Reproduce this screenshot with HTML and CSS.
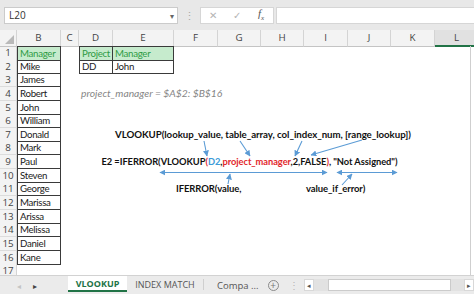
FILE: index.html
```html
<!DOCTYPE html>
<html>
<head>
<meta charset="utf-8">
<link rel="stylesheet" href="styles.css">
</head>
<body>
<div class="app">
  <div class="fbar">
    <div class="namebox"><span>L20</span><span class="dd">&#9662;</span></div>
    <div class="vdots">&#8942;</div>
    <div class="fbtns"><span class="fb dis">&#10005;</span><span class="fb dis">&#10003;</span><span class="fb fx"><i>f</i><sub>x</sub></span></div>
    <div class="finput"></div>
  </div>

  <div class="sheet">
    <div class="hrow">
      <div class="corner"><span class="tri"></span></div>
      <div class="ch">B</div><div class="ch">C</div><div class="ch">D</div><div class="ch">E</div>
      <div class="ch">F</div><div class="ch">G</div><div class="ch">H</div><div class="ch">I</div>
      <div class="ch">J</div><div class="ch">K</div><div class="ch sel">L</div>
    </div>
    <div class="rows">
      <div class="row"><div class="rh">1</div><div class="c g bt bl br bb">Manager</div><div class="c cD1 g bt bl br bb">Project</div><div class="c g bt br bb">Manager</div></div>
      <div class="row"><div class="rh">2</div><div class="c bl br bb">Mike</div><div class="c cD1 bl br bb">DD</div><div class="c br bb">John</div></div>
      <div class="row"><div class="rh">3</div><div class="c bl br bb">James</div></div>
      <div class="row"><div class="rh">4</div><div class="c bl br bb">Robert</div><div class="c cD note">project_manager = $A$2: $B$16</div></div>
      <div class="row"><div class="rh">5</div><div class="c bl br bb">John</div></div>
      <div class="row"><div class="rh">6</div><div class="c bl br bb">William</div></div>
      <div class="row"><div class="rh">7</div><div class="c bl br bb">Donald</div><div class="c cE fml vl">VLOOKUP(lookup_value, table_array, col_index_num, [range_lookup])</div></div>
      <div class="row"><div class="rh">8</div><div class="c bl br bb">Mark</div></div>
      <div class="row"><div class="rh">9</div><div class="c bl br bb">Paul</div><div class="c cD fml e2">E2 =IFERROR(VLOOKUP<span class="red">(</span><span class="blue">D2</span>,<span class="red">project_manager</span>,2,FALSE<span class="red">)</span>, "Not Assigned")</div></div>
      <div class="row"><div class="rh">10</div><div class="c bl br bb">Steven</div></div>
      <div class="row"><div class="rh">11</div><div class="c bl br bb">George</div><div class="c cF fml sm">IFERROR(value,</div><div class="c cI fml sm">value_if_error)</div></div>
      <div class="row"><div class="rh">12</div><div class="c bl br bb">Marissa</div></div>
      <div class="row"><div class="rh">13</div><div class="c bl br bb">Arissa</div></div>
      <div class="row"><div class="rh">14</div><div class="c bl br bb">Melissa</div></div>
      <div class="row"><div class="rh">15</div><div class="c bl br bb">Daniel</div></div>
      <div class="row"><div class="rh">16</div><div class="c bl br bb">Kane</div></div>
      <div class="row"><div class="rh">17</div></div>
    </div>
  </div>

  <div class="tabs">
    <div class="nav"><span class="nv dim">&#9666;</span><span class="nv">&#9656;</span></div>
    <div class="tab active">VLOOKUP</div>
    <div class="tab mid">INDEX MATCH</div>
    <div class="tab last">Compa ...</div>
    <div class="add"><span class="plus">+</span></div>
    <div class="tdots">&#8942;</div>
    <div class="hscroll">
      <span class="sarrow">&#9666;</span>
      <div class="track"><div class="thumb"></div></div>
      <span class="sarrow">&#9656;</span>
    </div>
  </div>

  <svg class="arrows" width="474" height="294" viewBox="0 0 474 294">
    <defs>
      <marker id="ah" viewBox="0 0 10 10" refX="9" refY="5" markerWidth="6" markerHeight="6" markerUnits="userSpaceOnUse" orient="auto-start-reverse">
        <path d="M0,0 L10,5 L0,10 z" fill="#5b9bd5"/>
      </marker>
    </defs>
    <g stroke="#5b9bd5" stroke-width="1.1" fill="none">
      <line x1="204" y1="141" x2="207" y2="156" marker-end="url(#ah)"/>
      <line x1="240" y1="141" x2="250" y2="156" marker-end="url(#ah)"/>
      <line x1="302" y1="141" x2="295" y2="156" marker-end="url(#ah)"/>
      <line x1="362" y1="140" x2="311" y2="155" marker-end="url(#ah)"/>
      <line x1="160" y1="172.5" x2="327" y2="172.5" marker-start="url(#ah)" marker-end="url(#ah)"/>
      <line x1="337" y1="172.5" x2="397" y2="172.5" marker-start="url(#ah)" marker-end="url(#ah)"/>
      <line x1="228" y1="184" x2="230" y2="174" marker-end="url(#ah)"/>
      <line x1="342" y1="185" x2="352" y2="174" marker-end="url(#ah)"/>
    </g>
  </svg>
</div>
</body>
</html>
```

FILE: styles.css
```css
* { box-sizing: border-box; margin: 0; padding: 0; }
html, body { width: 474px; height: 294px; overflow: hidden; background: #fff; }
body { font-family: "Open Sans", "Noto Sans", sans-serif; }

.app { position: relative; width: 474px; height: 294px; display: flex; flex-direction: column; overflow: hidden; }

/* formula bar */
.fbar { flex: none; height: 30px; background: #e8e8e8; display: flex; align-items: center; padding-left: 4px; }
.namebox { width: 174px; height: 17px; background: #fff; border: 1px solid #cbcbcb; display: flex; align-items: center; justify-content: space-between; padding: 0 3px 0 4px; font-size: 10px; color: #333; }
.dd { font-size: 8px; color: #666; }
.vdots { width: 22px; text-align: center; color: #a8a8a8; font-size: 11px; }
.fbtns { width: 74px; height: 17px; background: #fff; border: 1px solid #d6d6d6; display: flex; align-items: center; }
.fb { width: 24px; text-align: center; font-size: 10px; }
.fb.dis { color: #b4b4b4; }
.fx { color: #555; font-family: "Liberation Serif", serif; font-size: 11px; }
.fx sub { font-size: 7px; font-style: italic; }
.finput { margin-left: 2px; flex: 1; height: 17px; background: #fff; border: 1px solid #d6d6d6; border-right: none; }

/* sheet */
.sheet { flex: 1; display: flex; flex-direction: column; overflow: hidden; }
.hrow, .row {
  display: grid;
  grid-template-columns: 17px 44px 18px 34px 61px 44px 43px 43px 44px 43px 44px 44px;
}
.hrow { flex: none; height: 16px; background: #f3f3f3; }
.corner { position: relative; border-right: 1px solid #d4d4d4; border-bottom: 1px solid #c4c4c4; }
.tri { display: block; position: absolute; right: 2px; bottom: 2px; width: 0; height: 0; border-left: 9px solid transparent; border-bottom: 9px solid #b9b9b9; }
.ch { border-right: 1px solid #d4d4d4; border-bottom: 1px solid #c4c4c4; font-size: 9.8px; color: #444; text-align: center; line-height: 15px; }
.ch.sel { background: #e1e1e1; border-bottom: 2px solid #217346; }

.rows { flex: 1; width: 471px; border-right: 1px solid #cfcfcf; overflow: hidden; }
.row { height: 13.65px; }
.rh { background: #f3f3f3; border-right: 1px solid #d4d4d4; border-bottom: 1px solid #dcdcdc; font-size: 9.8px; color: #444; text-align: center; line-height: 13px; }
.c { font-family: "Lato", "Liberation Sans", sans-serif; font-size: 9.7px; letter-spacing: -0.3px; color: #1a1a1a; line-height: 13px; padding-left: 2px; white-space: nowrap; }
.g { background: #c6ebcd; color: #2f9b45; }
.bt { border-top: 1px solid #3a3a3a; }
.bl { border-left: 1px solid #3a3a3a; }
.br { border-right: 1px solid #3a3a3a; }
.bb { border-bottom: 1px solid #3a3a3a; }
.cD1 { grid-column: 4; }
.cD { grid-column: 4 / -1; }
.cE { grid-column: 5 / -1; }
.cF { grid-column: 6 / 9; }
.cI { grid-column: 9 / -1; }
.note { font-style: italic; color: #858585; font-size: 10.3px; letter-spacing: 0; }
.fml { font-weight: bold; color: #111; }
.vl { font-size: 9.7px; letter-spacing: -0.05px; }
.e2 { padding-left: 22.5px; font-size: 9.3px; letter-spacing: -0.05px; }
.sm { font-size: 9.5px; letter-spacing: -0.1px; }
.red { color: #e2262b; }
.blue { color: #3b9bd8; }

/* tabs */
.tabs { flex: none; height: 19px; background: #ebebeb; border-top: 1px solid #d2d2d2; display: flex; align-items: stretch; font-size: 9px; color: #555; white-space: nowrap; }
.nav { flex: none; width: 68px; display: flex; align-items: center; padding-left: 17px; gap: 12px; }
.nv { font-size: 8px; color: #444; }
.nv.dim { color: #c4c4c4; }
.tab { flex: none; display: flex; align-items: center; }
.tab.active { background: #fff; color: #217346; font-weight: bold; width: 59px; justify-content: center; border-bottom: 2px solid #217346; margin-bottom: 2px; }
.tab.mid { width: 77px; justify-content: center; border-right: 1px solid #cfcfcf; margin: 3px 0 4px; }
.tab.last { padding-left: 13px; width: 63px; font-size: 9.5px; }
.add { flex: none; width: 12px; display: flex; align-items: center; justify-content: center; }
.plus { width: 11px; height: 11px; border: 1px solid #8a8a8a; border-radius: 50%; display: flex; align-items: center; justify-content: center; font-size: 10px; line-height: 1; color: #777; }
.tdots { flex: none; width: 25px; text-align: center; color: #b5b5b5; font-size: 10px; line-height: 18px; padding-left: 5px; }
.hscroll { flex: 1; display: flex; align-items: center; }
.sarrow { flex: none; width: 10px; height: 12px; font-size: 7px; color: #555; background: #fff; border: 1px solid #d8d8d8; display: flex; align-items: center; justify-content: center; }
.track { flex: 1; height: 12px; background: #e2e2e2; padding: 0 13px 0 14px; display: flex; }
.thumb { flex: 1; background: #fff; border: 1px solid #cbcbcb; }

.arrows { position: absolute; left: 0; top: 0; pointer-events: none; }
```
